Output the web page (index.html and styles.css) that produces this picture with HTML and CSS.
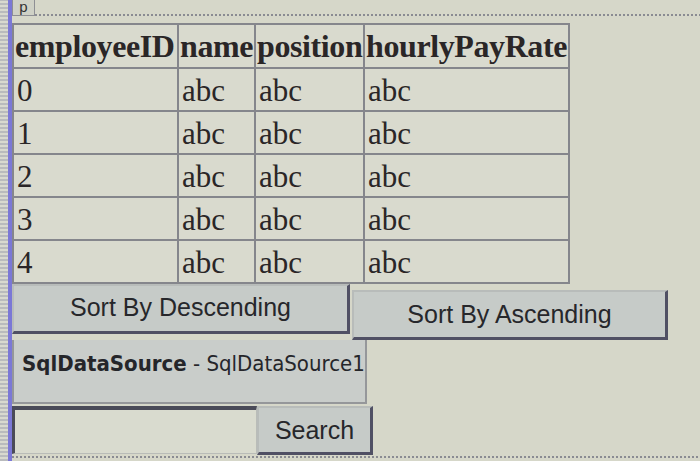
FILE: index.html
```html
<!DOCTYPE html>
<html>
<head>
<meta charset="utf-8">
<link rel="stylesheet" href="styles.css">
</head>
<body>
<div class="frame">
  <div class="ruler"></div>
  <div class="edge"></div>
  <div class="content">
    <div class="topbar">
      <div class="ptab">p</div>
      <div class="dots"></div>
    </div>
    <table class="grid">
      <colgroup>
        <col class="c1"><col class="c2"><col class="c3"><col class="c4">
      </colgroup>
      <thead>
        <tr><th>employeeID</th><th>name</th><th>position</th><th>hourlyPayRate</th></tr>
      </thead>
      <tbody>
        <tr><td>0</td><td>abc</td><td>abc</td><td>abc</td></tr>
        <tr><td>1</td><td>abc</td><td>abc</td><td>abc</td></tr>
        <tr><td>2</td><td>abc</td><td>abc</td><td>abc</td></tr>
        <tr><td>3</td><td>abc</td><td>abc</td><td>abc</td></tr>
        <tr><td>4</td><td>abc</td><td>abc</td><td>abc</td></tr>
      </tbody>
    </table>
    <div class="sortrow">
      <button class="btn desc">Sort By Descending</button>
      <button class="btn asc">Sort By Ascending</button>
    </div>
    <div class="datasource"><b>SqlDataSource</b> - SqlDataSource1</div>
    <div class="searchrow">
      <div class="input"></div>
      <button class="btn search">Search</button>
    </div>
    <div class="bottomdots"></div>
  </div>
</div>
</body>
</html>
```
FILE: styles.css
```css
html, body {
  margin: 0;
  padding: 0;
  width: 700px;
  height: 461px;
  overflow: hidden;
  background: #d6d7c9;
}

.frame {
  display: flex;
  height: 461px;
}

.ruler {
  width: 8px;
  background-image:
    repeating-linear-gradient(0deg, #b9bbbd 0 2px, #d8d9cf 2px 4px);
}

.edge {
  width: 4px;
  background: #7b78d6;
}

.content {
  flex: 1;
  display: flex;
  flex-direction: column;
}

.content > * {
  flex-shrink: 0;
}

.topbar {
  display: flex;
  height: 17px;
  align-items: flex-end;
}

.ptab {
  width: 23px;
  height: 16px;
  margin-bottom: 1px;
  border: 1px solid #8e8f94;
  border-top: none;
  background: #cfd1c6;
  font-family: "Liberation Sans", Arial, sans-serif;
  font-size: 15px;
  line-height: 14px;
  color: #333;
  text-align: center;
  box-sizing: border-box;
}

.dots {
  flex: 1;
  height: 2px;
  margin-bottom: 1px;
  background-image: repeating-linear-gradient(90deg, #8a8b92 0 2px, transparent 2px 4px);
}

.grid {
  margin-top: 6px;
  border-collapse: collapse;
  width: 556px;
  table-layout: fixed;
  font-family: "Liberation Serif", "Times New Roman", serif;
  color: #2a2627;
  background: #d9dace;
}

.c1 { width: 165px; }
.c2 { width: 77px; }
.c3 { width: 109px; }
.c4 { width: 205px; }

.grid th, .grid td {
  border: 2px solid #85868c;
  padding: 0 0 0 3px;
  text-align: left;
  white-space: nowrap;
  overflow: hidden;
}

.grid th {
  height: 42px;
  font-size: 32px;
  font-weight: bold;
  letter-spacing: -0.4px;
  padding-left: 1px;
}

.grid td {
  height: 34px;
  font-size: 31px;
  line-height: 30px;
  vertical-align: top;
  padding-top: 7px;
}

.btn {
  font-family: "Liberation Sans", Arial, sans-serif;
  font-size: 25px;
  color: #26272b;
  background: #c6cbc8;
  border-style: solid;
  border-width: 2px 3px 3px 2px;
  border-color: #b8bcba #505064 #505064 #b8bcba;
  padding: 0;
  margin: 0;
  box-sizing: border-box;
}

.sortrow {
  display: flex;
  gap: 2px;
}

.desc {
  width: 338px;
  height: 50px;
  padding-bottom: 2px;
}

.asc {
  width: 316px;
  height: 50px;
  margin-top: 6px;
}

.datasource {
  width: 355px;
  height: 64px;
  box-sizing: border-box;
  padding: 11px 0 0 8px;
  background: #c9cdca;
  border: 2px solid #95979a;
  border-top: none;
  font-family: "DejaVu Sans Condensed", "DejaVu Sans", sans-serif;
  font-stretch: condensed;
  font-size: 22px;
  color: #25262a;
  white-space: nowrap;
}

.datasource b {
  font-weight: bold;
}

.searchrow {
  display: flex;
  margin-top: 2px;
}

.input {
  width: 245px;
  height: 48px;
  box-sizing: border-box;
  border-style: solid;
  border-width: 4px 1px 1px 3px;
  border-color: #4a4b58 #b9bcb8 #b9bcb8 #4a4b58;
  background: #d9dbcf;
}

.search {
  width: 116px;
  height: 49px;
}

.bottomdots {
  height: 2px;
  margin-top: 1px;
  background-image: repeating-linear-gradient(90deg, #8a8b92 0 2px, transparent 2px 4px);
}
```
